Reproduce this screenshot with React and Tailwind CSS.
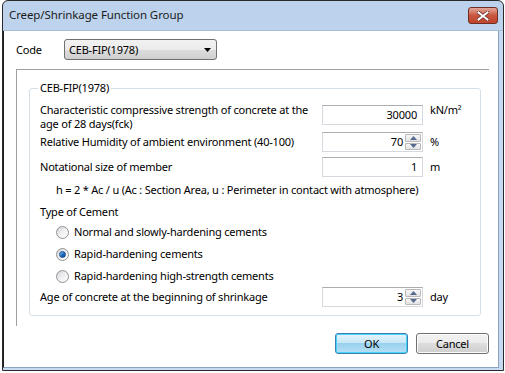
import React from "react";

const font = "font-['Segoe_UI','Noto_Sans',sans-serif]";

function Spin() {
  return (
    <div className="absolute right-[1px] top-[1px] bottom-[1px] w-[16px] flex flex-col gap-[1px]">
      <div className="flex-1 border border-[#b9b9b9] rounded-[1px] bg-gradient-to-b from-[#f7f7f7] to-[#e3e3e3] flex items-center justify-center">
        <svg width="7" height="4" viewBox="0 0 7 4"><path d="M0 4 L3.5 0 L7 4 Z" fill="#56698f" /></svg>
      </div>
      <div className="flex-1 border border-[#b9b9b9] rounded-[1px] bg-gradient-to-b from-[#f7f7f7] to-[#e3e3e3] flex items-center justify-center">
        <svg width="7" height="4" viewBox="0 0 7 4"><path d="M0 0 L3.5 4 L7 0 Z" fill="#56698f" /></svg>
      </div>
    </div>
  );
}

function Field({ value, spin }) {
  return (
    <div className="relative w-[101px] h-[20px] border border-[#d5d8de] border-t-[#abadb3] bg-white flex items-center justify-end shrink-0">
      <span className={spin ? "pr-[19px]" : "pr-[5px]"}>{value}</span>
      {spin && <Spin />}
    </div>
  );
}

function Radio({ checked, label }) {
  return (
    <div className="h-[22px] flex items-center pl-[16px]">
      <div className="w-[13px] h-[13px] rounded-full border border-[#8f9296] bg-gradient-to-br from-[#d2d4d8] via-[#f0f0f0] to-[#ffffff] flex items-center justify-center">
        {checked && (
          <div className="w-[7px] h-[7px] rounded-full bg-gradient-to-br from-[#8fc6f0] via-[#1f6fc4] to-[#0b3f8c] border border-[#1a4f8f]" />
        )}
      </div>
      <span className="ml-[5px]">{label}</span>
    </div>
  );
}

export default function App() {
  return (
    <div className={`w-[505px] h-[373px] bg-white ${font} text-[11px] tracking-[-0.2px] leading-[14px] text-black`}>
      <div className="ml-[2px] w-[502px] h-[371px] border border-[#2a2a2a] rounded-t-[6px] bg-gradient-to-b from-[#bcd2ec] to-[#d3e2f3] flex flex-col">
        {/* title bar */}
        <div className="h-[29px] flex items-start shrink-0">
          <span className="ml-[6px] mt-[7px] text-[#1b1b1b] text-[11.5px] tracking-[-0.1px]">Creep/Shrinkage Function Group</span>
          <div className="ml-auto mr-[5px] mt-[6px] w-[30px] h-[17px] rounded-[3px] border border-[#6f2f25] bg-gradient-to-b from-[#e2a89b] via-[#c8553f] to-[#c0452c] flex items-center justify-center">
            <svg width="12" height="10" viewBox="0 0 12 10">
              <path d="M1.5 1.5 L10.5 8.5 M10.5 1.5 L1.5 8.5" stroke="#5a2a22" strokeWidth="3.4" strokeLinecap="square" />
              <path d="M1.5 1.5 L10.5 8.5 M10.5 1.5 L1.5 8.5" stroke="#ffffff" strokeWidth="2" strokeLinecap="square" />
            </svg>
          </div>
        </div>
        {/* client */}
        <div className="flex-1 flex border-t border-[#a9bed6]">
          <div className="flex-1 bg-white border-l border-[#1f1f1f] border-r border-r-[#8aa3c1] border-b border-b-[#8aa3c1] pl-[12px]">
            {/* code row */}
            <div className="mt-[8px] h-[21px] flex items-center">
              <span className="w-[48px]">Code</span>
              <div className="w-[153px] h-[21px] rounded-[3px] border border-[#707070] bg-[linear-gradient(to_bottom,#f2f2f2_0%,#ebebeb_50%,#dddddd_50%,#cfcfcf_100%)] flex items-center px-[4px]">
                <span>CEB-FIP(1978)</span>
                <svg className="ml-auto mr-[1px]" width="7" height="4" viewBox="0 0 7 4"><path d="M0 0 L7 0 L3.5 4 Z" fill="#000" /></svg>
              </div>
            </div>
            {/* separator box */}
            <div className="mt-[9px] w-[473px] h-[257px] border-t border-l border-[#a0a0a0] pl-[12px] pt-[18px]">
              <div className="relative w-[452px] h-[228px] border border-[#d5dfe5] rounded-[3px] pl-[10px]">
                <span className="absolute left-[8px] top-[-8px] bg-white px-[2px]">CEB-FIP(1978)</span>
                {/* row 1 */}
                <div className="mt-[14px] flex items-start">
                  <div className="w-[282px] leading-[14px]">
                    Characteristic compressive strength of concrete at the<br />age of 28 days(fck)
                  </div>
                  <div className="mt-[2px]"><Field value="30000" /></div>
                  <span className="ml-[7px] mt-[0px]">kN/m²</span>
                </div>
                {/* row 2 */}
                <div className="mt-[1px] h-[20px] flex items-center">
                  <span className="w-[282px]">Relative Humidity of ambient environment (40-100)</span>
                  <Field value="70" spin />
                  <span className="ml-[7px]">%</span>
                </div>
                {/* row 3 */}
                <div className="mt-[5px] h-[20px] flex items-center">
                  <span className="w-[282px]">Notational size of member</span>
                  <Field value="1" />
                  <span className="ml-[7px]">m</span>
                </div>
                <div className="mt-[6px] pl-[16px]">h = 2 * Ac / u (Ac : Section Area, u : Perimeter in contact with atmosphere)</div>
                <div className="mt-[8px]">Type of Cement</div>
                <div className="mt-[2px]">
                  <Radio label="Normal and slowly-hardening cements" />
                  <Radio checked label="Rapid-hardening cements" />
                  <Radio label="Rapid-hardening high-strength cements" />
                </div>
                <div className="mt-[0px] h-[20px] flex items-center">
                  <span className="w-[282px]">Age of concrete at the beginning of shrinkage</span>
                  <Field value="3" spin />
                  <span className="ml-[7px]">day</span>
                </div>
              </div>
            </div>
            {/* buttons */}
            <div className="w-[473px] mt-[7px] flex justify-end gap-[8px]">
              <div className="w-[73px] h-[21px] rounded-[3px] border border-[#3c7fb1] shadow-[inset_0_0_0_1px_#48d3f8] bg-[linear-gradient(to_bottom,#e5f4fc_0%,#c4e5f6_50%,#98d1ef_50%,#b6e0f5_100%)] flex items-center justify-center">OK</div>
              <div className="w-[73px] h-[21px] rounded-[3px] border border-[#707070] shadow-[inset_0_0_0_1px_#fcfcfc] bg-[linear-gradient(to_bottom,#f2f2f2_0%,#ebebeb_50%,#dddddd_50%,#cfcfcf_100%)] flex items-center justify-center">Cancel</div>
            </div>
          </div>
          <div className="w-[4px] bg-[#c6dbf1]" />
        </div>
        <div className="h-[2px] bg-[#c6dbf1] shrink-0" />
      </div>
    </div>
  );
}
